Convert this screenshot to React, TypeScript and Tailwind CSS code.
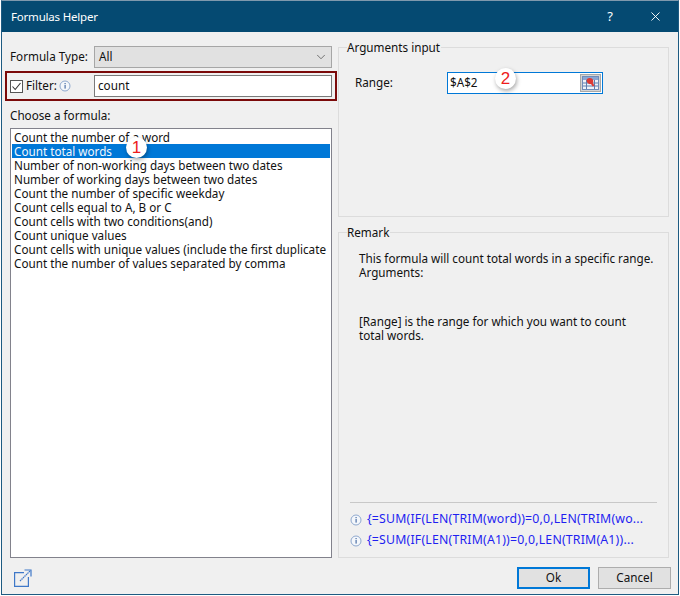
import { ChevronDown, X } from "lucide-react";

const formulas = [
  "Count the number of a word",
  "Count total words",
  "Number of non-working days between two dates",
  "Number of working days between two dates",
  "Count the number of specific weekday",
  "Count cells equal to A, B or C",
  "Count cells with two conditions(and)",
  "Count unique values",
  "Count cells with unique values (include the first duplicate",
  "Count the number of values separated by comma",
];

function InfoIcon() {
  return (
    <svg width="12" height="12" viewBox="0 0 12 12" className="shrink-0">
      <circle cx="6" cy="6" r="5" fill="#f4f7fb" stroke="#8fa9cf" strokeWidth="1" />
      <rect x="5.5" y="5" width="1.2" height="3.6" fill="#4a6fa5" />
      <rect x="5.5" y="3" width="1.2" height="1.2" fill="#4a6fa5" />
    </svg>
  );
}

function Badge({ n, className }: { n: string; className: string }) {
  return (
    <div
      className={`absolute w-[21px] h-[21px] rounded-full bg-white shadow-[1px_2px_4px_rgba(0,0,0,0.35)] flex items-center justify-center text-[#ee1c1c] text-[17px] leading-none font-['Liberation_Sans',sans-serif] ${className}`}
    >
      {n}
    </div>
  );
}

function RangePicker() {
  return (
    <div className="w-[21px] h-[18px] mr-px bg-[#d4d4d4] border border-[#a8a8a8] flex items-center justify-center">
      <svg width="17" height="14" viewBox="0 0 17 14">
        <rect x="0.5" y="0.5" width="16" height="13" fill="#eef2f8" stroke="#6f8cb8" />
        <rect x="1" y="1" width="15" height="3" fill="#8aa6d3" />
        <path d="M1 7h15M1 10h15M4.5 4v9M12.5 4v9" stroke="#5f7fae" strokeWidth="1" />
        <path d="M5 3c1.5-1.5 4-1.5 5.500 0 1 1 1 3 .3 4l1.700 2.500-1.800 1L9 8C7 8.500 5.200 7.500 4.800 5.600 4.600 4.500 4.500 3.600 5 3z" fill="#dc3a34" />
      </svg>
    </div>
  );
}

export default function App() {
  return (
    <div className="w-[680px] h-[596px] bg-white pb-px px-px font-['Noto_Sans',sans-serif] text-[11.7px] text-[#111]">
      <div className="h-full flex flex-col bg-[#f0f0f0] border border-[#1e5b82] border-t-[#7f99ad]">
        <div className="h-[31px] shrink-0 bg-[#054a72] text-white flex items-center pl-[9px]">
          <span className="text-[11.5px] tracking-[-0.2px]">Formulas Helper</span>
          <span className="ml-auto text-[13px] mr-[35px]">?</span>
          <X size={15} strokeWidth={1.5} className="mr-[15px]" />
        </div>

        <div className="flex-1 min-h-0 flex gap-px pl-[3px] pr-[9px]">
          <div className="w-[332px] shrink-0 flex flex-col">
            <div className="flex items-center h-[22px] mt-[14px] px-[5px]">
              <span className="w-[84px] shrink-0">Formula Type:</span>
              <div className="flex-1 h-[22px] bg-[#e1e1e1] border border-[#a6a6a6] flex items-center pl-[4px] pr-[3px]">
                <span>All</span>
                <ChevronDown size={14} strokeWidth={1.2} className="ml-auto text-[#444]" />
              </div>
            </div>
            <div className="h-[30px] mt-[3px] border-[2px] border-[#7b0a0a] flex items-center px-[3px]">
              <div className="w-[13px] h-[13px] border border-[#555] bg-white flex items-center justify-center">
                <svg width="11" height="11" viewBox="0 0 11 11">
                  <path d="M1.5 5.5L4.2 8.5L9.5 2" fill="none" stroke="#333" strokeWidth="1.1" />
                </svg>
              </div>
              <span className="ml-[3px]">Filter:</span>
              <span className="ml-[2px]"><InfoIcon /></span>
              <div className="ml-auto w-[238px] h-[22px] bg-white border border-[#7a7a7a] flex items-center pl-[3px]">
                count
              </div>
            </div>
            <div className="mt-[6px] ml-[5px] h-[17px] leading-[17px]">Choose a formula:</div>
            <div className="relative flex-1 mt-[4px] mx-[5px] bg-white border border-[#82828c] p-px">
              {formulas.map((f, i) => (
                <div
                  key={f}
                  className={`h-[14px] leading-[14px] pl-[2px] whitespace-nowrap ${i === 1 ? "bg-[#0078d7] text-[#f2f7fc]" : ""}`}
                >
                  {f}
                </div>
              ))}
              <Badge n="1" className="left-[115px] top-[8px]" />
            </div>
          </div>

          <div className="flex-1 flex flex-col pt-[15px]">
            <div className="relative h-[170px] shrink-0 border border-[#dcdcdc]">
              <span className="absolute -top-[8px] left-[8px] bg-[#f0f0f0] pr-[1px] leading-[15px]">Arguments input</span>
              <div className="flex items-center pt-[24px] pl-[16px]">
                <span className="w-[92px]">Range:</span>
                <div className="relative w-[156px] h-[22px] bg-white border border-[#0078d7] flex items-center justify-between pl-[2px]">
                  <span>$A$2</span>
                  <RangePicker />
                  <Badge n="2" className="left-[47px] -top-[5px]" />
                </div>
              </div>
            </div>
            <div className="relative flex-1 mt-[15px] border border-[#dcdcdc] flex flex-col">
              <span className="absolute -top-[8px] left-[8px] bg-[#f0f0f0] pr-[1px] leading-[15px]">Remark</span>
              <div className="flex-1 pt-[18px] pl-[20px] pr-[10px] leading-[14px]">
                <p>This formula will count total words in a specific range.</p>
                <p>Arguments:</p>
                <p className="mt-[35px]">
                  [Range] is the range for which you want to count
                  <br />
                  total words.
                </p>
              </div>
              <div className="mx-[11px] border-t border-[#c8c8c8] pt-[6px] pb-[6px] text-[#1f1ff0] text-[12.3px] tracking-[0.2px]">
                <div className="flex items-center gap-[5px] h-[21px] whitespace-nowrap">
                  <InfoIcon />
                  <span>{"{=SUM(IF(LEN(TRIM(word))=0,0,LEN(TRIM(wo..."}</span>
                </div>
                <div className="flex items-center gap-[5px] h-[21px] whitespace-nowrap">
                  <InfoIcon />
                  <span>{"{=SUM(IF(LEN(TRIM(A1))=0,0,LEN(TRIM(A1))..."}</span>
                </div>
              </div>
            </div>
          </div>
        </div>

        <div className="h-[36px] shrink-0 flex items-start pt-[9px] pl-[12px] pr-[7px]">
          <svg width="18" height="18" viewBox="0 0 18 18" fill="none" stroke="#3f78c8" strokeWidth="1.2" className="mt-[2px]">
            <path d="M10 3.6H0.6V17.4H14.4V8" />
            <path d="M6 12L16 2" strokeDasharray="1.5 0.6" />
            <path d="M10.5 1H17V7.5" />
          </svg>
          <button className="ml-auto w-[73px] h-[22px] bg-[#e1e1e1] border-2 border-[#0078d7]">Ok</button>
          <button className="ml-[8px] w-[73px] h-[22px] bg-[#e1e1e1] border border-[#adadad]">Cancel</button>
        </div>
      </div>
    </div>
  );
}
